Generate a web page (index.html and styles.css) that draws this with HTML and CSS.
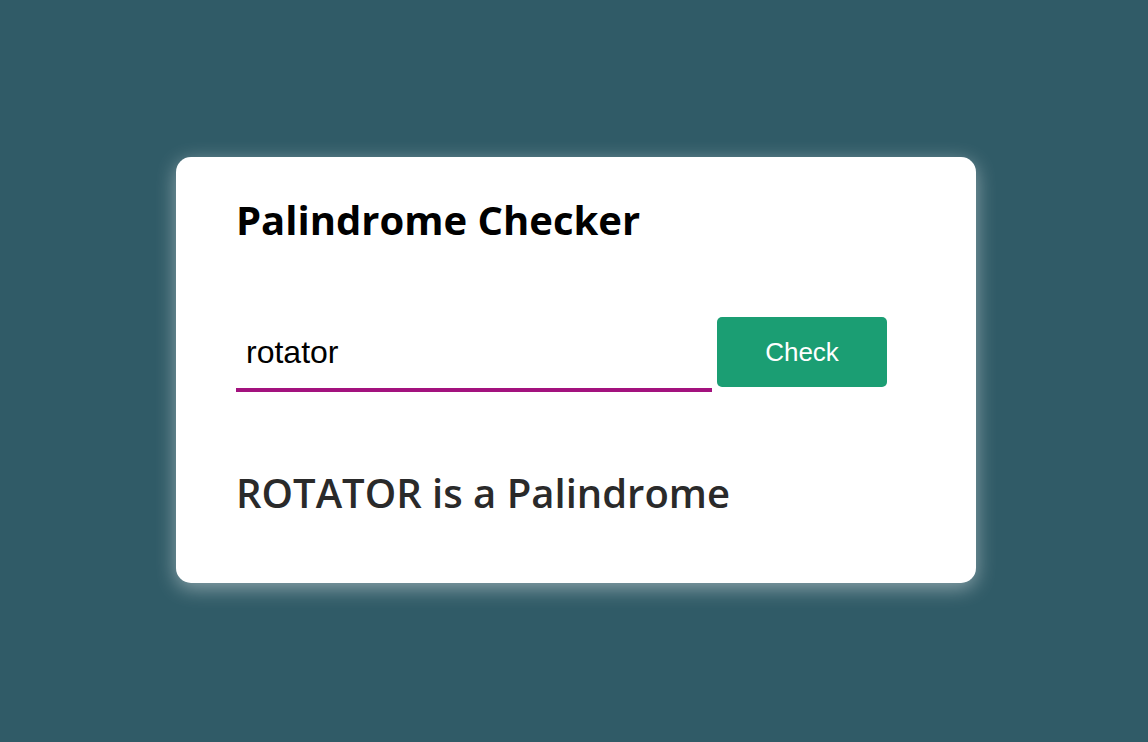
FILE: index.html
```html
<!DOCTYPE html>
<html lang="en">
  <head>
    <meta charset="UTF-8" />
    <meta name="viewport" content="width=device-width, initial-scale=1.0" />
    <title>Palindrome Checker</title>
    <link rel="stylesheet" href="styles.css">
  </head>
  <body>
    <!-- Checker card -->
    <div class="container">
      <h1 class="title">Palindrome Checker</h1>

      <div class="input-row">
        <input type="text" class="word-input" value="rotator" />
        <button class="check-btn">Check</button>
      </div>

      <p class="result">ROTATOR is a Palindrome</p>
    </div>
  </body>
</html>
```

FILE: styles.css
```css
body {
  margin: 0;
  padding: 0;
  height: 742px;
  background-color: #305b67;
  font-family: "Open Sans", sans-serif;
}

/* Card */
.container {
  width: 800px;
  box-sizing: border-box;
  margin: 157px 0 0 176px;
  padding: 35px 60px 63px 60px;
  background-color: #fff;
  border-radius: 15px;
  box-shadow: 0 5px 20px rgba(255, 255, 255, 0.45);
}

.title {
  margin: 0;
  font-size: 40px;
  font-weight: 700;
  color: #000;
}

/* Input + button */
.input-row {
  display: flex;
  align-items: flex-start;
  margin-top: 70px;
}

.word-input {
  width: 476px;
  height: 75px;
  box-sizing: border-box;
  padding: 0 0 0 10px;
  border: none;
  border-bottom: 4px solid #a3127e;
  outline: none;
  font-family: "Liberation Sans", Arial, sans-serif;
  font-size: 32px;
  color: #000;
}

.check-btn {
  width: 170px;
  height: 70px;
  margin-left: 5px;
  border: none;
  border-radius: 5px;
  background-color: #1b9e73;
  color: #fff;
  font-family: "Liberation Sans", Arial, sans-serif;
  font-size: 26px;
  cursor: pointer;
}

/* Result message */
.result {
  margin: 73px 0 0;
  font-size: 40px;
  font-weight: 600;
  color: #2a2a2a;
}
```
